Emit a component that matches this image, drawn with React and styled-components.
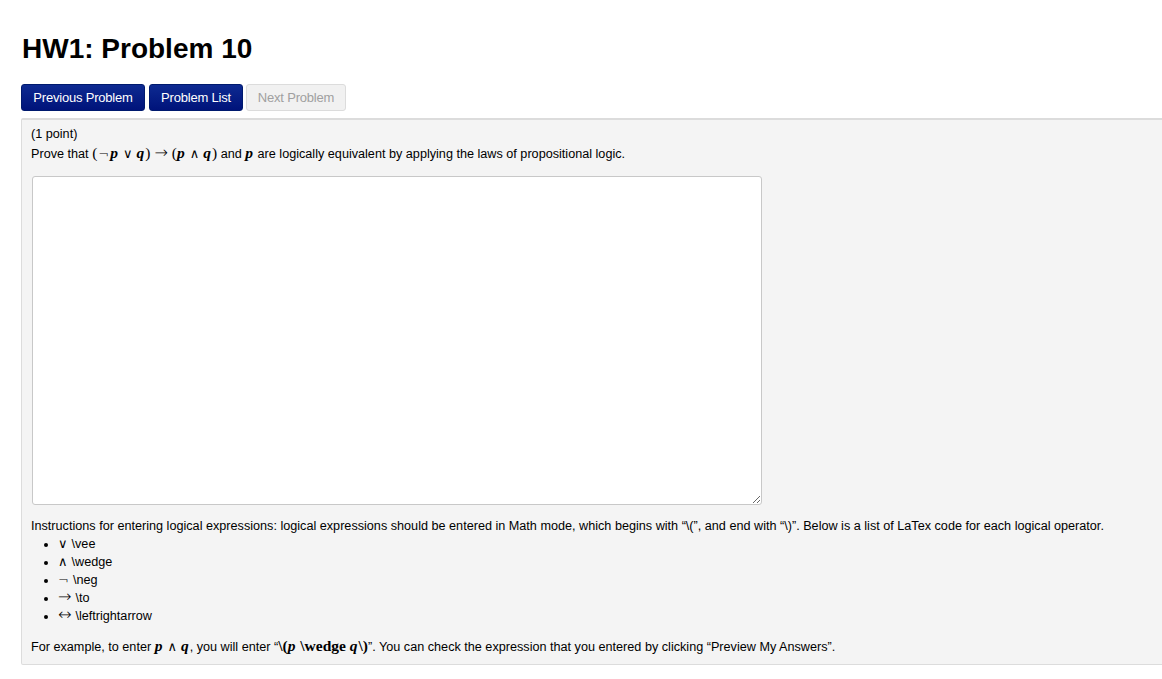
import React from "react";
import styled, { createGlobalStyle } from "styled-components";

const GlobalStyle = createGlobalStyle`
  html, body {
    margin: 0;
    padding: 0;
    background: #fff;
    overflow-x: hidden;
  }
  body {
    font-family: "Liberation Sans", Arial, sans-serif;
    font-size: 12.65px;
    color: #000;
  }
`;

const Page = styled.div`
  padding: 32px 0 0 21px;
`;

const Title = styled.h1`
  margin: 0 0 0 1px;
  font-size: 28px;
  line-height: 34px;
  font-weight: bold;
`;

const Nav = styled.div`
  display: flex;
  gap: 4px;
  margin-top: 18px;
`;

const NavButton = styled.span`
  display: inline-flex;
  align-items: center;
  justify-content: center;
  box-sizing: border-box;
  height: 27px;
  width: ${(p) => p.$w}px;
  margin-left: ${(p) => (p.$tight ? -1 : 0)}px;
  border-radius: 3px;
  font-size: 13px;
  letter-spacing: -0.2px;
  border: 1px solid ${(p) => (p.$disabled ? "#dcdcdc" : "#001a6e")};
  background: ${(p) =>
    p.$disabled ? "#f1f1f1" : "linear-gradient(#0d2a91, #00137a)"};
  color: ${(p) => (p.$disabled ? "#a0a0a0" : "#fff")};
`;

const Panel = styled.div`
  margin-top: 7px;
  margin-right: -20px;
  box-sizing: border-box;
  background: #f4f4f4;
  border: 1px solid #dcdcdc;
  border-top: 2px solid #dcdcdc;
  border-radius: 2px;
  padding: 5px 9px 8px 9px;
  line-height: 18px;
`;

const Line = styled.div`
  margin-top: ${(p) => p.$gap || 0}px;
`;

const Math = styled.span`
  font-family: "Liberation Serif", "Times New Roman", serif;
  font-size: 15.5px;
  line-height: 1;
  font-weight: ${(p) => (p.$light ? "normal" : "bold")};
  font-style: ${(p) => (p.$upright ? "normal" : "italic")};
  margin-right: ${(p) => (p.$upright ? 0 : 1)}px;
`;

// ∨ and ∧ read best in DejaVu Serif; arrows and ¬ in the thin DejaVu Sans
const Op = styled.span`
  font-family: ${(p) => (p.$thin ? '"DejaVu Sans", sans-serif' : '"DejaVu Serif", serif')};
  font-size: ${(p) => (p.$arrow ? 16 : 13)}px;
  font-weight: ${(p) => (p.$thin ? 200 : "normal")};
  line-height: 1;
  margin: 0 ${(p) => (p.$pre ? 1 : 4)}px;
`;

const Sym = styled.span`
  font-family: ${(p) => (p.$thin ? '"DejaVu Sans", sans-serif' : '"DejaVu Serif", serif')};
  font-size: ${(p) => (p.$arrow ? 16 : 13)}px;
  font-weight: ${(p) => (p.$thin ? 200 : "normal")};
  line-height: 1;
  margin-right: 4px;
`;

const Answer = styled.textarea`
  display: block;
  box-sizing: border-box;
  width: 730px;
  height: 329px;
  margin: 13px 0 12px 1px;
  border: 1px solid #c8c8c8;
  border-radius: 3px;
  background: #fff;
  resize: both;
`;

const OpList = styled.ul`
  margin: 0;
  padding-left: 27px;
  list-style: disc;
`;

const OpItem = styled.li``;

const Example = styled.p`
  margin: 13px 0 0 0;
`;

const Code = styled.span`
  font-family: "Liberation Serif", "Times New Roman", serif;
  font-size: 15.5px;
  line-height: 1;
  font-weight: bold;
`;

export default function App() {
  return (
    <>
      <GlobalStyle />
      <Page>
        <Title>HW1: Problem 10</Title>
        <Nav>
          <NavButton $w={124}>Previous Problem</NavButton>
          <NavButton $w={94}>Problem List</NavButton>
          <NavButton $w={100} $disabled $tight>
            Next Problem
          </NavButton>
        </Nav>
        <Panel>
          <Line>(1 point)</Line>
          <Line $gap={2}>
            Prove that{" "}
            <Math $upright $light>(</Math>
            <Op $pre $thin>¬</Op>
            <Math>p</Math>
            <Op>∨</Op>
            <Math>q</Math>
            <Math $upright $light>)</Math>
            <Op $arrow $thin>→</Op>
            <Math $upright $light>(</Math>
            <Math>p</Math>
            <Op>∧</Op>
            <Math>q</Math>
            <Math $upright $light>)</Math> and <Math>p</Math> are logically
            equivalent by applying the laws of propositional logic.
          </Line>
          <Answer />
          <Line>
            Instructions for entering logical expressions: logical expressions
            should be entered in Math mode, which begins with “\(”, and end with
            “\)”. Below is a list of LaTex code for each logical operator.
          </Line>
          <OpList>
            <OpItem><Sym>∨</Sym>\vee</OpItem>
            <OpItem><Sym>∧</Sym>\wedge</OpItem>
            <OpItem><Sym $thin>¬</Sym>\neg</OpItem>
            <OpItem><Sym $arrow $thin>→</Sym>\to</OpItem>
            <OpItem><Sym $arrow $thin>↔</Sym>\leftrightarrow</OpItem>
          </OpList>
          <Example>
            For example, to enter <Math>p</Math>
            <Op>∧</Op>
            <Math>q</Math>, you will enter “
            <Code>
              \(<Math>p</Math> \wedge <Math>q</Math>\)
            </Code>
            ”. You can check the expression that you entered by clicking
            “Preview My Answers”.
          </Example>
        </Panel>
      </Page>
    </>
  );
}
